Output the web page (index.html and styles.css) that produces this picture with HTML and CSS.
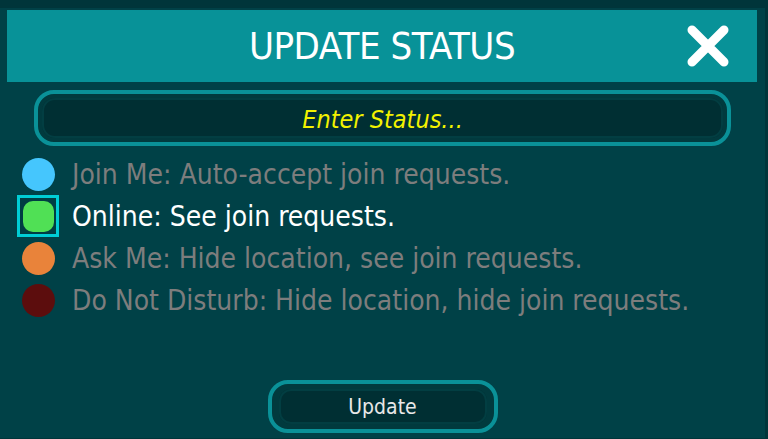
FILE: index.html
```html
<!DOCTYPE html>
<html lang="en">
<head>
    <meta charset="UTF-8">
    <title>Update Status</title>
    <link rel="stylesheet" href="styles.css">
</head>
<body>
    <div class="panel">
        <div class="header">
            <h2>UPDATE STATUS</h2>
            <span class="close">
                <svg width="46" height="46" viewBox="0 0 46 46">
                    <path d="M7 7 L39 39 M39 7 L7 39" stroke="#fff" stroke-width="9" stroke-linecap="round"/>
                </svg>
            </span>
        </div>
        <div class="status-field">
            <div class="status-inner">Enter Status...</div>
        </div>
        <ul class="options">
            <li><span class="mark"><span class="dot join"></span></span>Join Me: Auto-accept join requests.</li>
            <li class="selected"><span class="mark"><span class="dot online"></span></span>Online: See join requests.</li>
            <li><span class="mark"><span class="dot ask"></span></span>Ask Me: Hide location, see join requests.</li>
            <li><span class="mark"><span class="dot busy"></span></span>Do Not Disturb: Hide location, hide join requests.</li>
        </ul>
        <div class="actions">
            <button class="update-btn"><span>Update</span></button>
        </div>
    </div>
</body>
</html>
```

FILE: styles.css
```css
body {
    margin: 0;
    background-color: #00353a;
    font-family: "DejaVu Sans Condensed", "DejaVu Sans", sans-serif;
    width: 768px;
    height: 439px;
    overflow: hidden;
}

.panel {
    margin-top: 8px;
    margin-right: 3px;
    height: 428px;
    background-color: #004147;
    padding: 2px 8px 0 7px;
    display: flex;
    flex-direction: column;
}

.header {
    height: 72px;
    background-color: #089298;
    display: flex;
    align-items: center;
    justify-content: center;
    position: relative;
}

.header h2 {
    margin: 0;
    color: #fff;
    font-weight: normal;
    font-size: 38px;
    letter-spacing: -0.5px;
}

.close {
    position: absolute;
    right: 26px;
    top: 13px;
    height: 46px;
}

.status-field {
    margin: 8px 26px 0 27px;
    height: 56px;
    border: 4px solid #0a9198;
    border-radius: 20px;
    background-color: #013a3e;
    box-sizing: border-box;
    padding: 4px;
    display: flex;
}

.status-inner {
    flex: 1;
    border-radius: 13px;
    background-color: #002f33;
    box-shadow: inset 0 0 0 2px #023e42;
    color: #f2f200;
    font-style: italic;
    font-size: 25px;
    padding-top: 3px;
    display: flex;
    align-items: center;
    justify-content: center;
}

.options {
    list-style: none;
    margin: 7px 0 0 0;
    padding: 0 0 0 10px;
}

.options li {
    display: flex;
    align-items: center;
    height: 42px;
    color: #7d7d7d;
    font-size: 28px;
}

.options li.selected {
    color: #fff;
}

.mark {
    width: 42px;
    height: 42px;
    box-sizing: border-box;
    display: flex;
    align-items: center;
    justify-content: center;
    margin-right: 13px;
}

.selected .mark {
    border: 3px solid #00cdd5;
    background-color: #003d43;
}

.dot {
    width: 33px;
    height: 33px;
    border-radius: 50%;
}

.dot.join { background-color: #45c6fd; }
.dot.online { background-color: #50e055; border-radius: 10px; width: 31px; height: 31px; }
.dot.ask { background-color: #e9833a; }
.dot.busy { background-color: #5c0d0d; }

.actions {
    margin-top: auto;
    margin-bottom: 5px;
    display: flex;
    justify-content: center;
    padding-left: 1px;
}

.update-btn {
    width: 230px;
    height: 53px;
    border: 4px solid #0a9198;
    border-radius: 20px;
    background-color: #013a3e;
    padding: 5px 7px;
    display: flex;
    font-family: inherit;
}

.update-btn span {
    flex: 1;
    border-radius: 12px;
    background-color: #002f33;
    box-shadow: inset 0 0 0 2px #023e42;
    color: #e8e8e8;
    font-size: 21px;
    display: flex;
    align-items: center;
    justify-content: center;
}
```
